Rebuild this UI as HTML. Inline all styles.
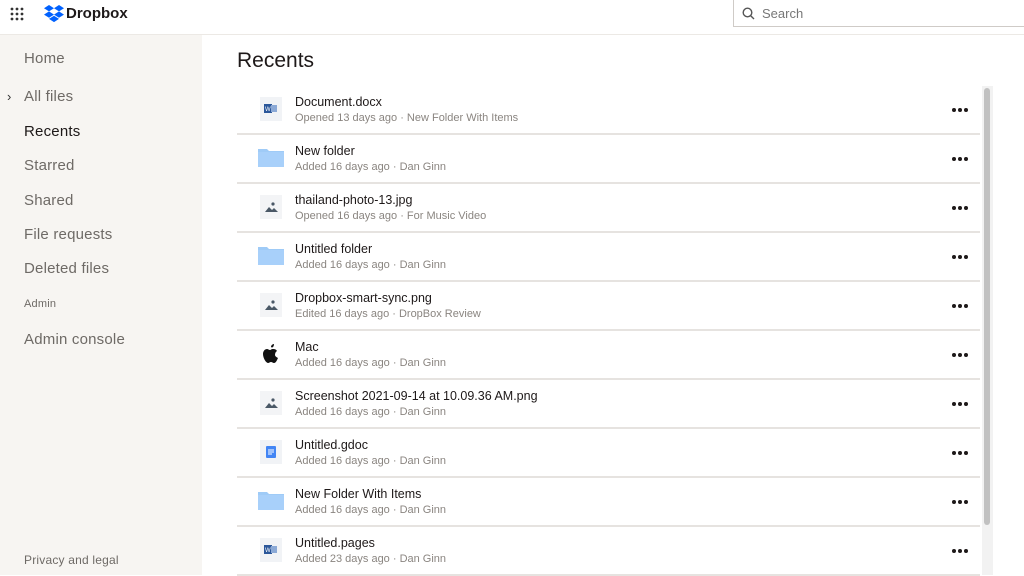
<!DOCTYPE html>
<html><head><meta charset="utf-8"><style>
*{margin:0;padding:0;box-sizing:border-box}
body{width:1024px;height:575px;overflow:hidden;background:#fff;font-family:"Liberation Sans",sans-serif;position:relative}
.hdr{position:absolute;left:0;top:0;width:1024px;height:35px;border-bottom:1px solid #ece9e5;background:#fff}
.side{position:absolute;left:0;top:35px;width:202px;height:540px;background:#f7f5f2}
.nav{position:absolute;left:24px;font-size:15px;color:#6e6a66;letter-spacing:.2px}
.search{position:absolute;left:733px;top:0;width:300px;height:27px;border:1px solid #cfcbc7;border-top:none}
.search span{position:absolute;left:28px;top:6px;font-size:13px;color:#777}
.row{position:absolute;left:237px;width:743px;height:49px;border-bottom:2px solid #e6e3e0}
.nm{position:absolute;left:58px;top:9px;font-size:12.5px;color:#1e1919}
.sb{position:absolute;left:58px;top:26px;font-size:11px;color:#8a8580}
.dots{position:absolute;left:715px;top:22px;width:16px;height:4px}
.dots i{position:absolute;top:0;width:4px;height:4px;border-radius:2px;background:#1e1919}
.ic{position:absolute;left:21px;top:10px;width:26px;height:26px}
</style></head><body>
<div class="hdr">
<svg style="position:absolute;left:10px;top:7px" width="14" height="14"><g fill="#333"><circle cx="2" cy="2" r="1.4"/><circle cx="7" cy="2" r="1.4"/><circle cx="12" cy="2" r="1.4"/><circle cx="2" cy="7" r="1.4"/><circle cx="7" cy="7" r="1.4"/><circle cx="12" cy="7" r="1.4"/><circle cx="2" cy="12" r="1.4"/><circle cx="7" cy="12" r="1.4"/><circle cx="12" cy="12" r="1.4"/></g></svg>
<svg style="position:absolute;left:44px;top:5px" width="20" height="18" viewBox="0 0 20 18"><g fill="#0061fe"><path d="M5 0L0 3.2 5 6.4 10 3.2z"/><path d="M15 0L10 3.2 15 6.4 20 3.2z"/><path d="M0 9.6L5 12.8 10 9.6 5 6.4z"/><path d="M15 6.4L10 9.6 15 12.8 20 9.6z"/><path d="M5 13.9L10 17.1 15 13.9 10 10.7z"/></g></svg>
<div style="position:absolute;left:66px;top:5px;font-size:15px;font-weight:bold;color:#1e1919">Dropbox</div>
<div class="search"><svg style="position:absolute;left:8px;top:7px" width="13" height="13"><circle cx="5.5" cy="5.5" r="4.3" stroke="#555" stroke-width="1.4" fill="none"/><path d="M8.7 8.7L12 12" stroke="#555" stroke-width="1.4"/></svg><span>Search</span></div>
</div>
<div class="side">
<div class="nav" style="top:15px">Home</div>
<div style="position:absolute;left:7px;top:54px;font-size:13px;color:#333">›</div>
<div class="nav" style="top:53px">All files</div>
<div class="nav" style="top:88px;color:#1e1919">Recents</div>
<div class="nav" style="top:122px">Starred</div>
<div class="nav" style="top:157px">Shared</div>
<div class="nav" style="top:191px">File requests</div>
<div class="nav" style="top:225px">Deleted files</div>
<div class="nav" style="top:263px;font-size:11px">Admin</div>
<div class="nav" style="top:296px">Admin console</div>
<div class="nav" style="top:518px;font-size:12px">Privacy and legal</div>
</div>
<div style="position:absolute;left:237px;top:49px;font-size:21px;color:#1e1919">Recents</div>
<div style="position:absolute;left:982px;top:86px;width:11px;height:489px;background:#f2f2f2"></div>
<div style="position:absolute;left:984px;top:88px;width:6px;height:437px;background:#c1c1c1;border-radius:3px"></div>
<div id="rows"></div>
<script>
var d=[["Document.docx","Opened 13 days ago · New Folder With Items","w"],["New folder","Added 16 days ago · Dan Ginn","f"],["thailand-photo-13.jpg","Opened 16 days ago · For Music Video","i"],["Untitled folder","Added 16 days ago · Dan Ginn","f"],["Dropbox-smart-sync.png","Edited 16 days ago · DropBox Review","i"],["Mac","Added 16 days ago · Dan Ginn","a"],["Screenshot 2021-09-14 at 10.09.36 AM.png","Added 16 days ago · Dan Ginn","i"],["Untitled.gdoc","Added 16 days ago · Dan Ginn","g"],["New Folder With Items","Added 16 days ago · Dan Ginn","f"],["Untitled.pages","Added 23 days ago · Dan Ginn","w"]];
var ic={w:'<rect x="2" y="1" width="22" height="24" fill="#f1f3f6"/><rect x="6" y="8" width="8" height="9" fill="#2b579a"/><rect x="13" y="9" width="6" height="7" fill="#8ba9d6"/><text x="7" y="15" font-size="6" fill="#fff" font-family="Liberation Sans">W</text>',
f:'<path d="M0 4h9l2 2h15v16H0z" fill="#9fcbf7"/><path d="M0 7h26v15H0z" fill="#a8d0fa"/>',
i:'<rect x="2" y="1" width="22" height="24" fill="#f3f4f6"/><circle cx="15" cy="10" r="1.6" fill="#4a5866"/><path d="M7 18l4-5 3 3 2-2 4 4z" fill="#4a5866"/>',
a:'<path d="M17 14c0-3 2-4 2-4-1-2-3-2-4-2-2 0-2 1-3 1s-2-1-3-1c-2 0-4 2-4 5 0 4 3 9 5 9 1 0 2-1 3-1s2 1 3 1c2 0 3-3 4-5-2-1-3-2-3-3zM15 6c1-1 1-3 1-3-1 0-3 1-3 3 0 0 1 1 2 0z" fill="#111"/>',
g:'<rect x="2" y="1" width="22" height="24" fill="#f1f3f6"/><rect x="8" y="7" width="10" height="12" rx="1" fill="#4285f4"/><path d="M10 11h6M10 13h6M10 15h4" stroke="#fff"/>'};
var h='';d.forEach(function(r,k){h+='<div class="row" style="top:'+(86+k*49)+'px"><svg class="ic" viewBox="0 0 26 26">'+ic[r[2]]+'</svg><div class="nm">'+r[0]+'</div><div class="sb">'+r[1]+'</div><div class="dots"><i style="left:0"></i><i style="left:6px"></i><i style="left:12px"></i></div></div>'});
document.getElementById('rows').innerHTML=h;
</script>
</body></html>
